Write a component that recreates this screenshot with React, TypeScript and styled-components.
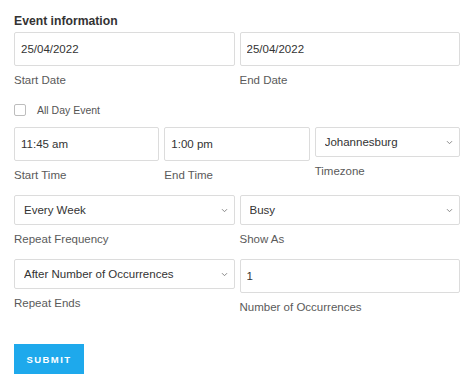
import React from 'react';
import styled, { createGlobalStyle } from 'styled-components';

const GlobalStyle = createGlobalStyle`
  body {
    margin: 0;
    background: #ffffff;
    font-family: "Liberation Sans", Arial, Helvetica, sans-serif;
    color: #333333;
  }
`;

const chevron = `url("data:image/svg+xml,%3Csvg xmlns='http://www.w3.org/2000/svg' width='7' height='5' viewBox='0 0 7 5'%3E%3Cpath d='M1 1.2l2.5 2.5 2.5-2.5' fill='none' stroke='%23888' stroke-width='1'/%3E%3C/svg%3E")`;

const Form = styled.form`
  display: flex;
  flex-direction: column;
  width: 446px;
  padding: 14px 14px 0 14px;
`;

const Title = styled.h3`
  margin: 0 0 3px 0;
  font-size: 12.2px;
  line-height: 15px;
  font-weight: 700;
  color: #333333;
`;

const Row = styled.div<{ $cols: number; $after: number }>`
  display: grid;
  grid-template-columns: repeat(${(p) => p.$cols}, 1fr);
  column-gap: 5px;
  align-items: start;
  margin-bottom: ${(p) => p.$after}px;
`;

const Field = styled.div`
  display: flex;
  flex-direction: column;
  min-width: 0;
`;

const Input = styled.input`
  box-sizing: border-box;
  width: 100%;
  height: 34px;
  padding: 0 6px;
  border: 1px solid #dcdcdc;
  border-radius: 2px;
  background: #ffffff;
  font-family: inherit;
  font-size: 11.5px;
  color: #333333;
  outline: none;
`;

const Select = styled.select`
  box-sizing: border-box;
  width: 100%;
  height: 30px;
  padding: 0 20px 0 9px;
  border: 1px solid #dcdcdc;
  border-radius: 2px;
  background: #ffffff ${chevron} no-repeat right 6px center;
  appearance: none;
  -webkit-appearance: none;
  font-family: inherit;
  font-size: 11.5px;
  color: #333333;
  outline: none;
`;

const Label = styled.label`
  margin-top: 7px;
  font-size: 11.5px;
  line-height: 14px;
  color: #5a5a5a;
`;

const CheckRow = styled.label`
  display: flex;
  align-items: center;
  gap: 11px;
  height: 12px;
  margin: 17px 0 11px 0;
  font-size: 10.5px;
  color: #555555;
`;

const Box = styled.span`
  box-sizing: border-box;
  width: 12px;
  height: 12px;
  border: 1px solid #bdbdbd;
  border-radius: 2px;
  background: #ffffff;
`;

const Submit = styled.button`
  align-self: flex-start;
  width: 70px;
  height: 30px;
  padding: 0;
  border: none;
  border-radius: 0;
  background: #1ea9ec;
  color: #ffffff;
  font-family: inherit;
  font-size: 9.5px;
  font-weight: 700;
  letter-spacing: 1.4px;
`;

const App: React.FC = () => {
  return (
    <>
      <GlobalStyle />
      <Form onSubmit={(e) => e.preventDefault()}>
        <Title>Event information</Title>
        <Row $cols={2} $after={0}>
          <Field>
            <Input defaultValue="25/04/2022" />
            <Label>Start Date</Label>
          </Field>
          <Field>
            <Input defaultValue="25/04/2022" />
            <Label>End Date</Label>
          </Field>
        </Row>
        <CheckRow>
          <Box />
          All Day Event
        </CheckRow>
        <Row $cols={3} $after={13}>
          <Field>
            <Input defaultValue="11:45 am" />
            <Label>Start Time</Label>
          </Field>
          <Field>
            <Input defaultValue="1:00 pm" />
            <Label>End Time</Label>
          </Field>
          <Field>
            <Select defaultValue="Johannesburg">
              <option>Johannesburg</option>
            </Select>
            <Label>Timezone</Label>
          </Field>
        </Row>
        <Row $cols={2} $after={13}>
          <Field>
            <Select defaultValue="Every Week">
              <option>Every Week</option>
            </Select>
            <Label>Repeat Frequency</Label>
          </Field>
          <Field>
            <Select defaultValue="Busy">
              <option>Busy</option>
            </Select>
            <Label>Show As</Label>
          </Field>
        </Row>
        <Row $cols={2} $after={30}>
          <Field>
            <Select defaultValue="After Number of Occurrences">
              <option>After Number of Occurrences</option>
            </Select>
            <Label>Repeat Ends</Label>
          </Field>
          <Field>
            <Input defaultValue="1" />
            <Label>Number of Occurrences</Label>
          </Field>
        </Row>
        <Submit type="submit">SUBMIT</Submit>
      </Form>
    </>
  );
};

export default App;
